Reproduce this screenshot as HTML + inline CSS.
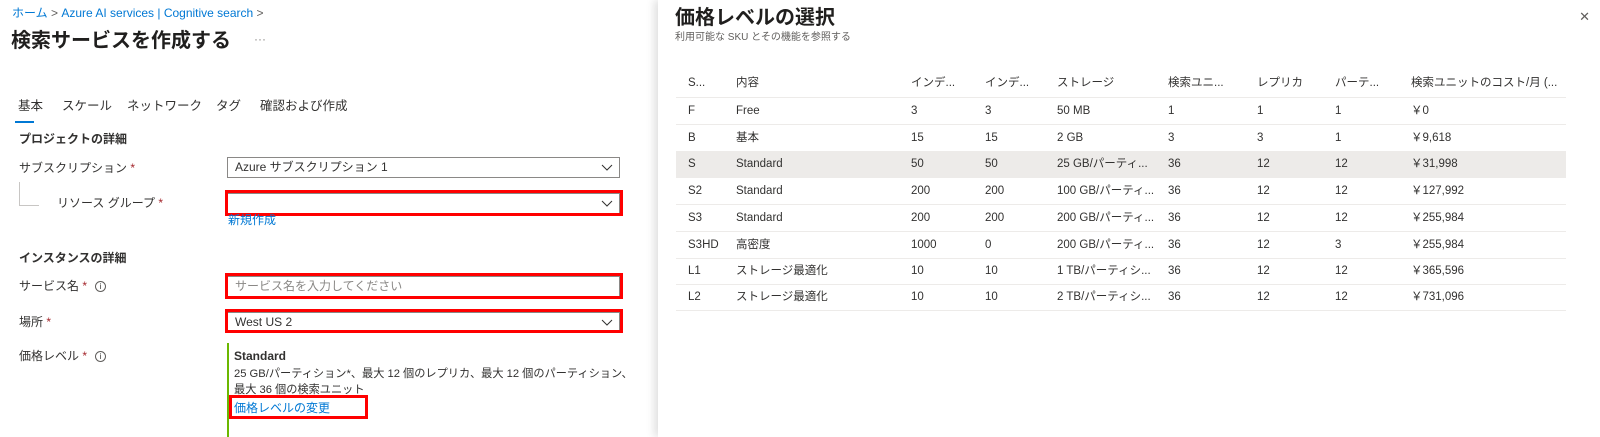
<!DOCTYPE html>
<html><head><meta charset="utf-8"><style>
*{margin:0;padding:0;box-sizing:border-box}
body{width:1600px;height:437px;overflow:hidden;background:#fff;font-family:"Liberation Sans","Noto Sans CJK JP",sans-serif;color:#323130;position:relative;font-size:12px;line-height:14px}
.a{position:absolute;white-space:nowrap}
.blue{color:#0078d4}
.req{color:#a4262c}
.inp{position:absolute;border:1px solid #8a8886;height:21px;left:227px;width:393px;padding-left:7px;line-height:19px;font-size:12px}
.red{position:absolute;border:3px solid #f00}
.chev{position:absolute;right:6px;top:4px;width:12px;height:10px}
.info{display:inline-block;width:11px;height:11px;border:1px solid #605e5c;border-radius:50%;font-size:8px;line-height:9px;text-align:center;margin-left:8px;vertical-align:1px}
.panel{position:absolute;left:658px;top:0;width:942px;height:437px;background:#fff;box-shadow:-4px 0 8px rgba(0,0,0,.12)}
.row{position:absolute;left:18px;width:890px;height:27px;border-bottom:1px solid #edebe9;font-size:11.5px}
.row span{position:absolute;top:6px;white-space:nowrap;line-height:14px;height:14px}
</style></head><body>
<div class="a blue" style="left:12px;top:6px;font-size:12px">ホーム <span style="color:#605e5c">&gt;</span> Azure AI services | Cognitive search <span style="color:#605e5c">&gt;</span></div>
<div class="a" style="left:11px;top:29px;font-size:20px;line-height:24px;font-weight:bold;color:#201f1e">検索サービスを作成する</div>
<div class="a" style="left:254px;top:32px;color:#8a8886">···</div>
<div class="a" style="left:18px;top:99px;font-size:12.5px">基本</div>
<div class="a" style="left:15px;top:121px;width:19px;height:2px;background:#0078d4"></div>
<div class="a" style="left:62px;top:99px;font-size:12.5px">スケール</div>
<div class="a" style="left:127px;top:99px;font-size:12.5px">ネットワーク</div>
<div class="a" style="left:216px;top:99px;font-size:12.5px">タグ</div>
<div class="a" style="left:260px;top:99px;font-size:12.5px">確認および作成</div>
<div class="a" style="left:19px;top:132px;font-weight:bold">プロジェクトの詳細</div>
<div class="a" style="left:19px;top:161px">サブスクリプション <span class="req">*</span></div>
<div class="inp" style="top:157px">Azure サブスクリプション 1<svg class="chev" viewBox="0 0 12 10"><path d="M1 3l5 5 5-5" stroke="#323130" fill="none"/></svg></div>
<div class="a" style="left:19px;top:182px;width:1px;height:24px;background:#c8c6c4"></div>
<div class="a" style="left:19px;top:205px;width:20px;height:1px;background:#c8c6c4"></div>
<div class="a" style="left:57px;top:196px">リソース グループ <span class="req">*</span></div>
<div class="inp" style="top:193px"><svg class="chev" viewBox="0 0 12 10"><path d="M1 3l5 5 5-5" stroke="#323130" fill="none"/></svg></div>
<div class="red" style="left:225px;top:190px;width:398px;height:26px"></div>
<div class="a blue" style="left:228px;top:213px">新規作成</div>
<div class="a" style="left:19px;top:251px;font-weight:bold">インスタンスの詳細</div>
<div class="a" style="left:19px;top:279px">サービス名 <span class="req">*</span><span class="info">i</span></div>
<div class="inp" style="top:276px;color:#8a8886">サービス名を入力してください</div>
<div class="red" style="left:225px;top:273px;width:398px;height:26px"></div>
<div class="a" style="left:19px;top:315px">場所 <span class="req">*</span></div>
<div class="inp" style="top:312px">West US 2<svg class="chev" viewBox="0 0 12 10"><path d="M1 3l5 5 5-5" stroke="#323130" fill="none"/></svg></div>
<div class="red" style="left:225px;top:309px;width:398px;height:24px"></div>
<div class="a" style="left:19px;top:349px">価格レベル <span class="req">*</span><span class="info">i</span></div>
<div class="a" style="left:227px;top:343px;width:2px;height:94px;background:#6bb700"></div>
<div class="a" style="left:234px;top:349px;font-weight:bold">Standard</div>
<div class="a" style="left:234px;top:367px;font-size:11.2px">25 GB/パーティション*、最大 12 個のレプリカ、最大 12 個のパーティション、</div>
<div class="a" style="left:234px;top:383px;font-size:11.2px">最大 36 個の検索ユニット</div>
<div class="a" style="left:229px;top:395px;width:139px;height:24px;border:3px solid #f00;background:#fff"></div>
<div class="a blue" style="left:234px;top:401px">価格レベルの変更</div>
<div class="panel">
<div class="a" style="left:17px;top:6px;font-size:20px;line-height:24px;font-weight:bold;color:#201f1e">価格レベルの選択</div>
<div class="a" style="left:17px;top:31px;font-size:10px;color:#605e5c">利用可能な SKU とその機能を参照する</div>
<div class="a" style="right:10px;top:10px;color:#605e5c;font-size:13px">✕</div>
<div class="row" style="top:70px;height:28px"><span style="left:12px">S...</span><span style="left:60px">内容</span><span style="left:235px">インデ...</span><span style="left:309px">インデ...</span><span style="left:381px">ストレージ</span><span style="left:492px">検索ユニ...</span><span style="left:581px">レプリカ</span><span style="left:659px">パーテ...</span><span style="left:735px">検索ユニットのコスト/月 (...</span></div>
<div class="row" style="top:98px"><span style="left:12px">F</span><span style="left:60px">Free</span><span style="left:235px">3</span><span style="left:309px">3</span><span style="left:381px">50 MB</span><span style="left:492px">1</span><span style="left:581px">1</span><span style="left:659px">1</span><span style="left:735px">￥0</span></div>
<div class="row" style="top:125px"><span style="left:12px">B</span><span style="left:60px">基本</span><span style="left:235px">15</span><span style="left:309px">15</span><span style="left:381px">2 GB</span><span style="left:492px">3</span><span style="left:581px">3</span><span style="left:659px">1</span><span style="left:735px">￥9,618</span></div>
<div class="row" style="top:151px;background:#edebe9"><span style="left:12px">S</span><span style="left:60px">Standard</span><span style="left:235px">50</span><span style="left:309px">50</span><span style="left:381px">25 GB/パーティ...</span><span style="left:492px">36</span><span style="left:581px">12</span><span style="left:659px">12</span><span style="left:735px">￥31,998</span></div>
<div class="row" style="top:178px"><span style="left:12px">S2</span><span style="left:60px">Standard</span><span style="left:235px">200</span><span style="left:309px">200</span><span style="left:381px">100 GB/パーティ...</span><span style="left:492px">36</span><span style="left:581px">12</span><span style="left:659px">12</span><span style="left:735px">￥127,992</span></div>
<div class="row" style="top:205px"><span style="left:12px">S3</span><span style="left:60px">Standard</span><span style="left:235px">200</span><span style="left:309px">200</span><span style="left:381px">200 GB/パーティ...</span><span style="left:492px">36</span><span style="left:581px">12</span><span style="left:659px">12</span><span style="left:735px">￥255,984</span></div>
<div class="row" style="top:232px"><span style="left:12px">S3HD</span><span style="left:60px">高密度</span><span style="left:235px">1000</span><span style="left:309px">0</span><span style="left:381px">200 GB/パーティ...</span><span style="left:492px">36</span><span style="left:581px">12</span><span style="left:659px">3</span><span style="left:735px">￥255,984</span></div>
<div class="row" style="top:258px"><span style="left:12px">L1</span><span style="left:60px">ストレージ最適化</span><span style="left:235px">10</span><span style="left:309px">10</span><span style="left:381px">1 TB/パーティシ...</span><span style="left:492px">36</span><span style="left:581px">12</span><span style="left:659px">12</span><span style="left:735px">￥365,596</span></div>
<div class="row" style="top:284px"><span style="left:12px">L2</span><span style="left:60px">ストレージ最適化</span><span style="left:235px">10</span><span style="left:309px">10</span><span style="left:381px">2 TB/パーティシ...</span><span style="left:492px">36</span><span style="left:581px">12</span><span style="left:659px">12</span><span style="left:735px">￥731,096</span></div>
</div>
</body></html>
